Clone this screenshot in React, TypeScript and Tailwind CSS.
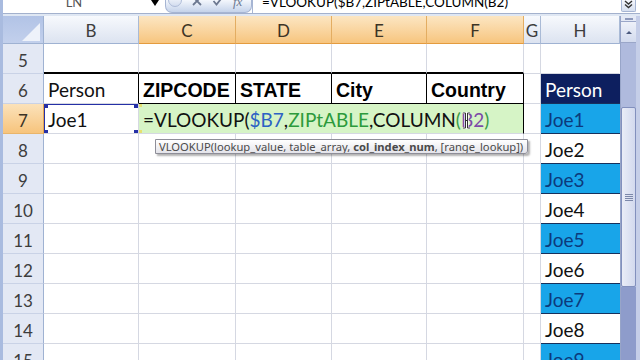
import React from 'react';

const CAL = "font-['Lato','Open_Sans',sans-serif]";
const ARB = "font-['Liberation_Sans',Arial,sans-serif]";
const GR = 'border-r-[#d5d8e2]';
const GB = 'border-b-[#d5d8e2]';

type CellProps = {
  w: string;
  r?: string;
  b?: string;
  cls?: string;
  children?: React.ReactNode;
};

function Cell({ w, r = GR, b = GB, cls = 'bg-white', children }: CellProps) {
  return (
    <div
      className={`${w} h-[30px] shrink-0 border-r border-b ${r} ${b} flex items-end pl-[4px] pb-[4px] whitespace-nowrap overflow-hidden relative ${cls}`}
    >
      {children}
    </div>
  );
}

function RH({ n, active }: { n: number; active?: boolean }) {
  return (
    <div
      className={`w-[41px] h-[30px] shrink-0 border-r border-b flex items-end justify-center pb-[4px] ${CAL} text-[17px] leading-none ${
        active
          ? 'bg-linear-to-b from-[#fbe2ba] to-[#f7c47c] border-r-[#e2a553] border-b-[#e9b56b] text-[#3b3326]'
          : 'bg-[#e3e8f4] border-r-[#9fb2d2] border-b-[#c9d2e6] text-[#3d3d3d]'
      }`}
    >
      {n}
    </div>
  );
}

function HCell({ text, blue }: { text: string; blue: boolean }) {
  return (
    <div
      className={`w-[79px] h-[30px] shrink-0 border-b border-b-[#17305c] flex items-end pl-[4px] pb-[4px] whitespace-nowrap overflow-hidden ${
        blue ? 'bg-[#18a5e9] text-[#0c3a7c]' : 'bg-white text-[#111]'
      }`}
    >
      <span className={`${CAL} text-[19px] leading-none`}>{text}</span>
    </div>
  );
}

const T = ({ children }: { children: React.ReactNode }) => (
  <span className={`${CAL} text-[19px] leading-none text-[#111]`}>{children}</span>
);
const BT = ({ children }: { children: React.ReactNode }) => (
  <span className={`${ARB} font-bold text-[19.5px] leading-none text-black -mb-[1px]`}>{children}</span>
);

const cols = [
  { l: 'B', w: 'w-[95px]', sel: false },
  { l: 'C', w: 'w-[97px]', sel: true },
  { l: 'D', w: 'w-[96px]', sel: true },
  { l: 'E', w: 'w-[95px]', sel: true },
  { l: 'F', w: 'w-[97px]', sel: true },
  { l: 'G', w: 'w-[17px]', sel: false },
  { l: 'H', w: 'w-[79px]', sel: false },
];

function Row({ n, children, active }: { n: number; children: React.ReactNode; active?: boolean }) {
  return (
    <div className="flex h-[30px] shrink-0">
      <RH n={n} active={active} />
      {children}
    </div>
  );
}

function EmptyRow({ n }: { n: number }) {
  return (
    <Row n={n}>
      <Cell w="w-[95px]" />
      <Cell w="w-[97px]" />
      <Cell w="w-[96px]" />
      <Cell w="w-[95px]" />
      <Cell w="w-[97px]" />
      <Cell w="w-[17px]" />
      <HCell text={`Joe${n - 6}`} blue={n % 2 === 1} />
    </Row>
  );
}

export default function App() {
  return (
    <div className="w-[640px] h-[360px] overflow-hidden flex bg-white relative">
      <div className="w-[3px] shrink-0 bg-[#a9bbdf]" />
      <div className="w-[637px] flex flex-col shrink-0">
        {/* formula bar */}
        <div className="h-[13px] flex overflow-hidden bg-white shrink-0">
          <div className="w-[142px] flex justify-center items-end">
            <span className={`${CAL} text-[13px] leading-none mb-[4px] text-[#555]`}>LN</span>
          </div>
          <div className="w-[20px] flex justify-center">
            <div className="w-0 h-0 border-l-[4px] border-r-[4px] border-t-[6px] border-l-transparent border-r-transparent border-t-black" />
          </div>
          <div className="w-[87px] h-[13px] rounded-b-[7px] bg-linear-to-b from-[#f4f7fc] to-[#c5d3ea] border-b border-x border-[#a6b5d3] flex items-start">
            <div className="ml-[2px] w-[14px] h-[14px] -mt-[7px] rounded-full bg-linear-to-b from-[#ffffff] to-[#d3ddef] border border-[#aebcd8]" />
            <svg className="ml-[9px] -mt-[5px]" width="12" height="12" viewBox="0 0 12 12">
              <path d="M2 2 L10 10 M10 2 L2 10" stroke="#6c7890" strokeWidth="1.8" fill="none" />
            </svg>
            <svg className="ml-[9px] -mt-[5px]" width="12" height="12" viewBox="0 0 12 12">
              <path d="M1.5 6 L4.5 9.5 L10.5 2" stroke="#6c7890" strokeWidth="1.8" fill="none" />
            </svg>
            <span className="ml-[9px] -mt-[5px] font-['Liberation_Serif',serif] italic text-[13px] leading-none text-[#6c7890]">
              fx
            </span>
          </div>
          <div className="flex-1 flex items-end pl-[9px] border-l border-[#a6b5d3] overflow-hidden whitespace-nowrap">
            <span className={`${CAL} text-[13.5px] leading-none text-black mb-[4px]`}>
              =VLOOKUP($B7,ZIPtABLE,COLUMN(B2)
            </span>
          </div>
          <div className="w-[2px]" />
          <div className="w-[15px] h-[12px] border-x border-b border-[#a6b5d3] rounded-b-[2px] bg-linear-to-b from-[#f5f7fc] to-[#d6dfef] flex justify-center">
            <svg width="9" height="9" viewBox="0 0 9 9">
              <path d="M1 1 L4.5 4 L8 1 M1 4.5 L4.5 7.5 L8 4.5" stroke="#333" strokeWidth="1.4" fill="none" />
            </svg>
          </div>
          <div className="w-[4px]" />
        </div>
        <div className="h-[1px] bg-[#a3b1cd] shrink-0" />
        <div className="h-[2px] bg-[#dfe7f3] shrink-0" />

        <div className="flex flex-1 min-h-0">
          {/* sheet */}
          <div className="w-[617px] flex flex-col shrink-0">
            {/* column headers */}
            <div className="flex h-[28px] shrink-0">
              <div className="w-[41px] h-[28px] bg-linear-to-b from-[#b2c3e6] to-[#c2d0ec] border-r border-b border-[#9fb2d2] shrink-0">
                <svg width="40" height="27" viewBox="0 0 40 27">
                  <polygon points="37,7 37,25 19,25" fill="#eef2fa" />
                </svg>
              </div>
              {cols.map((c) => (
                <div
                  key={c.l}
                  className={`${c.w} h-[28px] shrink-0 border-r border-b flex items-center justify-center pt-[2px] ${CAL} text-[17px] leading-none ${
                    c.sel
                      ? 'bg-linear-to-b from-[#fce6c2] to-[#f7c57e] border-r-[#e3ad62] border-b-[#e49b3e] text-[#3d3425]'
                      : 'bg-linear-to-b from-[#f7f9fd] to-[#dce3f0] border-r-[#a9bad6] border-b-[#9fb2d2] text-[#3d3d3d]'
                  }`}
                >
                  {c.l}
                </div>
              ))}
            </div>

            {/* row 5 */}
            <Row n={5}>
              <Cell w="w-[95px]" b="border-b-black border-b-2" />
              <Cell w="w-[97px]" b="border-b-black border-b-2" />
              <Cell w="w-[96px]" b="border-b-black border-b-2" />
              <Cell w="w-[95px]" b="border-b-black border-b-2" />
              <Cell w="w-[97px]" b="border-b-black border-b-2" />
              <Cell w="w-[17px]" />
              <Cell w="w-[79px]" r="border-r-transparent" />
            </Row>

            {/* row 6 */}
            <Row n={6}>
              <Cell w="w-[95px]" r="border-r-black">
                <T>Person</T>
              </Cell>
              <Cell w="w-[97px]" r="border-r-black" b="border-b-black">
                <BT>ZIPCODE</BT>
              </Cell>
              <Cell w="w-[96px]" r="border-r-black" b="border-b-black">
                <BT>STATE</BT>
              </Cell>
              <Cell w="w-[95px]" r="border-r-black" b="border-b-black">
                <BT>City</BT>
              </Cell>
              <Cell w="w-[97px]" r="border-r-black" b="border-b-black">
                <BT>Country</BT>
              </Cell>
              <Cell w="w-[17px]" />
              <div className="w-[79px] h-[30px] shrink-0 bg-[#0d1f5f] border-b border-b-[#17305c] flex items-end pl-[4px] pb-[4px]">
                <span className={`${CAL} text-[19px] leading-none text-white`}>Person</span>
              </div>
            </Row>

            {/* row 7 */}
            <Row n={7} active>
              <Cell w="w-[95px]">
                <T>Joe1</T>
                <div className="absolute left-0 top-0 w-[95px] h-[30px] border-[1.5px] border-[#2530a6]" />
                <div className="absolute left-0 top-0 w-[4px] h-[4px] bg-[#2530a6]" />
                <div className="absolute left-[90px] top-0 w-[4px] h-[4px] bg-[#2530a6]" />
                <div className="absolute left-0 top-[26px] w-[4px] h-[4px] bg-[#2530a6]" />
                <div className="absolute left-[90px] top-[26px] w-[4px] h-[4px] bg-[#2530a6]" />
              </Cell>
              <div className="w-[385px] h-[30px] shrink-0 bg-[#d6f4c6] border-r border-b border-r-black border-b-[#d5d8e2] flex items-end pl-[4px] pb-[4px] whitespace-nowrap overflow-hidden relative">
                <div className="absolute left-0 top-0 w-[3px] h-[3px] bg-[#e6e070]" />
                <div className="absolute left-0 bottom-0 w-[3px] h-[3px] bg-[#e6e070]" />
                <span className={`${CAL} text-[19px] leading-none text-[#111]`}>
                  =VLOOKUP(<span className="text-[#2c62c4]">$B7</span>,<span className="text-[#2c9a3c]">ZIPtABLE</span>,COLUMN
                  <span className="text-[#3c9c4a]">(</span>
                  <span className="text-[#7d4aa8]">B2</span>
                  <span className="text-[#3c9c4a]">)</span>
                </span>
              </div>
              <Cell w="w-[17px]" />
              <HCell text="Joe1" blue />
            </Row>

            {[8, 9, 10, 11, 12, 13, 14, 15].map((n) => (
              <EmptyRow key={n} n={n} />
            ))}
          </div>

          {/* scrollbar */}
          <div className="w-[20px] flex shrink-0">
            <div className="w-[16px] flex flex-col bg-[#afbadd] border-l border-[#98a5c8]">
              <div className="h-[6px] shrink-0 bg-[#e4e9f5] border-b border-[#9aa6c8] flex items-center justify-center">
                <div className="w-[8px] h-[2px] border-y border-[#8d99bb]" />
              </div>
              <div className="h-[21px] shrink-0 bg-linear-to-b from-[#eef1f9] to-[#d3dbee] border-b border-[#9aa6c8] flex items-center justify-center">
                <div className="w-0 h-0 border-l-[3px] border-r-[3px] border-b-[3px] border-l-transparent border-r-transparent border-b-[#4c5a7e]" />
              </div>
              <div className="h-[64px] shrink-0" />
              <div className="h-[180px] shrink-0 rounded-[2px] border border-[#8290bd] bg-linear-to-r from-[#eaedf7] to-[#d2d9ee] flex flex-col items-center justify-center gap-[1px]">
                <div className="w-[8px] h-[1px] bg-[#7c88aa]" />
                <div className="w-[8px] h-[1px] bg-[#7c88aa]" />
                <div className="w-[8px] h-[1px] bg-[#7c88aa]" />
                <div className="w-[8px] h-[1px] bg-[#7c88aa]" />
              </div>
              <div className="flex-1 bg-[#8e9ccb]" />
            </div>
            <div className="w-[4px] bg-[#c5cee8]" />
          </div>
        </div>
      </div>

      {/* tooltip */}
      <div className="absolute left-[155px] top-[139px] h-[15px] w-[373px] border border-[#8e8e98] rounded-br-[3px] bg-linear-to-b from-[#ffffff] to-[#e4e4ea] shadow-[2px_2px_2px_rgba(0,0,0,0.3)] flex items-center pl-[3px] whitespace-nowrap overflow-hidden">
        <span className="font-['Noto_Sans',sans-serif] text-[11.2px] leading-none text-[#4a4a4a]">
          VLOOKUP(lookup_value, table_array, <b className="font-bold">col_index_num</b>, [range_lookup])
        </span>
      </div>

      {/* I-beam cursor */}
      <svg className="absolute left-[462px] top-[112px]" width="9" height="17" viewBox="0 0 9 17">
        <path d="M1 1 H3.5 V16 H1 M8 1 H5.5 V16 H8 M3.5 8.5 H5.5" stroke="#ffffff" strokeWidth="2.2" fill="none" />
        <path d="M1 1 H3.5 V16 H1 M8 1 H5.5 V16 H8 M3.5 8.5 H5.5" stroke="#333" strokeWidth="1" fill="none" />
      </svg>
    </div>
  );
}
